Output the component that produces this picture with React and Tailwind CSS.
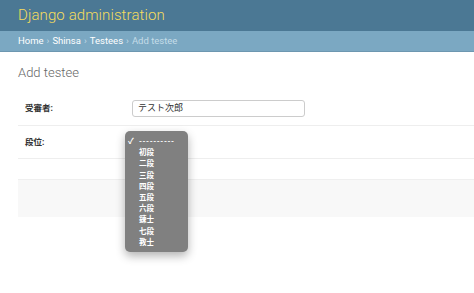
import React from 'react';

const ranks = ['初段', '二段', '三段', '四段', '五段', '六段', '錬士', '七段', '教士'];

const font = { fontFamily: 'Roboto, "Noto Sans CJK JP", sans-serif' };

export default function App() {
  return (
    <div className="min-h-[293px] w-[474px] bg-white overflow-hidden relative" style={font}>
      {/* header */}
      <div className="h-[31px] bg-[#4b7894] flex items-center px-[18px]">
        <span className="text-[15px] text-[#f5dd5d] font-light tracking-[0.1px]">Django administration</span>
      </div>
      {/* breadcrumbs */}
      <div className="h-[21px] bg-[#7ba8c2] border-b border-[#6d97b0] flex items-center px-[18px] text-[9.5px] text-white">
        <span>Home</span>
        <span className="mx-[3px] text-[#c4dce8]">›</span>
        <span>Shinsa</span>
        <span className="mx-[3px] text-[#c4dce8]">›</span>
        <span>Testees</span>
        <span className="mx-[3px] text-[#c4dce8]">›</span>
        <span className="text-[#c4dce8]">Add testee</span>
      </div>

      <div className="pl-[18px] pt-[13px]">
        <h1 className="text-[13px] font-light text-[#666] leading-[16px]">Add testee</h1>

        <div className="mt-[11px]">
          <div className="flex items-center h-[34px] border-b border-[#eeeeee] pl-[7px]">
            <label className="w-[107px] text-[8.5px] font-bold text-[#333]">受審者:</label>
            <div className="w-[173px] h-[17px] border border-[#cccccc] rounded-[3px] flex items-center px-[5px] text-[9px] text-[#333]">
              テスト次郎
            </div>
          </div>
          <div className="flex items-center h-[33px] border-b border-[#eeeeee] pl-[7px]">
            <label className="w-[107px] text-[8.5px] font-bold text-[#333]">段位:</label>
            <div className="w-[36px] h-[17px] rounded-[3px] bg-[#5a6fd0] ml-[-1px]" />
          </div>
        </div>

        <div className="mt-[20px] h-[38px] bg-[#f8f8f8] border-t border-[#efefef]" />
      </div>

      {/* native select popup */}
      <div className="absolute left-[125px] top-[131px] w-[63px] h-[121px] rounded-[5px] bg-[#808080] shadow-[0_4px_10px_rgba(0,0,0,0.3)] pt-[5px] text-white text-[7.5px] font-bold leading-[11.2px]">
        <div className="flex items-center pl-[3px]">
          <span className="w-[11px] text-[8px]">✓</span>
          <span className="tracking-[0.6px]">----------</span>
        </div>
        {ranks.map((r) => (
          <div key={r} className="pl-[14px]">{r}</div>
        ))}
      </div>
    </div>
  );
}
